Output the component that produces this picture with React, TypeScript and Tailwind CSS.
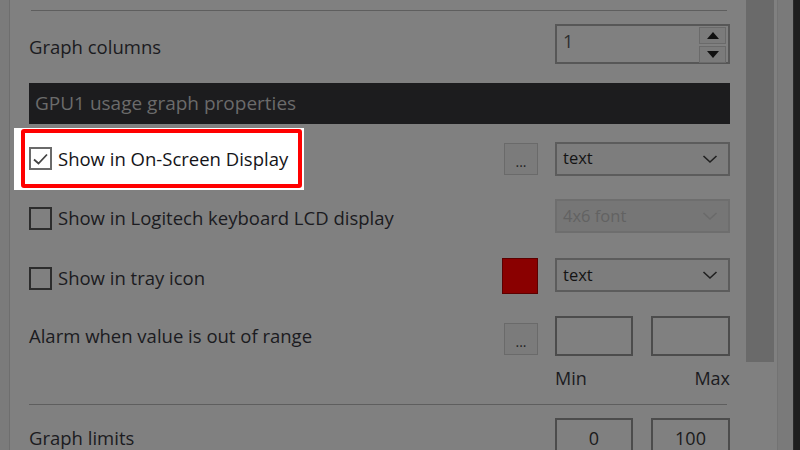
import React from 'react';

const font = { fontFamily: '"Open Sans", "Noto Sans", sans-serif' };

const Chevron: React.FC<{ color?: string }> = ({ color = '#202020' }) => (
  <svg width="16" height="10" viewBox="0 0 16 10" className="shrink-0">
    <path d="M1.5 2 L8 8 L14.5 2" fill="none" stroke={color} strokeWidth="1.6" />
  </svg>
);

const CheckBox: React.FC<{ checked?: boolean; light?: boolean }> = ({ checked, light }) => (
  <div
    className={`w-[23px] h-[23px] shrink-0 flex items-center justify-center ${
      light ? 'border-2 border-[#6a6a6a] bg-white' : 'border-2 border-[#2c2c2c]'
    }`}
  >
    {checked && (
      <svg width="17" height="14" viewBox="0 0 17 14">
        <path d="M2 7.5 L6.5 11.5 L15 2.5" fill="none" stroke="#444" strokeWidth="1.8" />
      </svg>
    )}
  </div>
);

const DotsButton = () => (
  <div className="w-[34px] h-[32px] border border-[#6a6a6a] bg-[#7b7b7b] flex items-end justify-center pb-[5px] text-[14px] leading-none text-[#222]">
    ...
  </div>
);

const Select: React.FC<{ value: string; disabled?: boolean }> = ({ value, disabled }) => (
  <div
    className={`w-[175px] h-[34px] flex items-center justify-between pl-[6px] pr-[10px] border-2 ${
      disabled ? 'bg-[#767676] border-[#6e6e6e] text-[#626262]' : 'bg-[#7d7d7d] border-[#5c5c5c] text-[#141414]'
    } text-[16.5px]`}
  >
    <span>{value}</span>
    <Chevron color={disabled ? '#6a6a6a' : '#202020'} />
  </div>
);

const Box: React.FC<{ children?: React.ReactNode; w: string }> = ({ children, w }) => (
  <div className={`${w} h-[40px] border-2 border-[#4c4c4c] flex items-center justify-center text-[18px] text-[#1a1a1a]`}>
    {children}
  </div>
);

export default function App() {
  return (
    <div className="w-[800px] h-[450px] overflow-hidden flex bg-[#808080] text-[#1b1b20]" style={font}>
      <div className="w-[10px] bg-[#7b7b7b] border-r border-[#6e6e6e]" />

      <div className="w-[729px] pl-[19px] pr-[9px] flex flex-col [&>*]:shrink-0">
        <div className="mt-[10px] h-px bg-[#5e5e5e] ml-[2px] mr-[3px]" />

        <div className="mt-[13px] h-[40px] flex items-center justify-between">
          <span className="text-[18.5px] mt-[6px]">Graph columns</span>
          <div className="w-[175px] h-[40px] border-2 border-[#575757] flex items-start justify-between pl-[6px] pr-[2px] pt-[1px]">
            <span className="text-[18px] leading-[28px] text-[#2e2e2e]">1</span>
            <div className="flex flex-col gap-[2px]">
              <div className="w-[27px] h-[17px] bg-[#7b7b7b] border border-[#6a6a6a] flex items-center justify-center">
                <svg width="12" height="7" viewBox="0 0 12 7"><path d="M0 7 L6 0 L12 7 Z" fill="#111" /></svg>
              </div>
              <div className="w-[27px] h-[17px] bg-[#7b7b7b] border border-[#6a6a6a] flex items-center justify-center">
                <svg width="12" height="7" viewBox="0 0 12 7"><path d="M0 0 L6 7 L12 0 Z" fill="#111" /></svg>
              </div>
            </div>
          </div>
        </div>

        <div className="mt-[19px] h-[41px] bg-[#1c1c1e] flex items-center pl-[6px] text-[19px] text-[#6b6b6b]">
          GPU1 usage graph properties
        </div>

        <div className="mt-[17px] h-[35px] flex items-center relative">
          <div className="absolute left-[-15px] top-[-13px] w-[290px] h-[62px] bg-white">
            <div className="absolute left-[7px] top-[1px] w-[281px] h-[59px] border-[4px] border-[#ff0000] rounded-[3px]" />
          </div>
          <div className="relative flex items-center gap-[6px]">
            <CheckBox checked light />
            <span className="text-[18.5px] text-[#141418]">Show in On-Screen Display</span>
          </div>
          <div className="ml-auto flex items-center gap-[17px]">
            <DotsButton />
            <Select value="text" />
          </div>
        </div>

        <div className="mt-[23px] h-[34px] flex items-center">
          <div className="flex items-center gap-[6px] mt-[4px]">
            <CheckBox />
            <span className="text-[18.5px]">Show in Logitech keyboard LCD display</span>
          </div>
          <div className="ml-auto">
            <Select value="4x6 font" disabled />
          </div>
        </div>

        <div className="mt-[25px] h-[36px] flex items-center">
          <div className="flex items-center gap-[6px] mt-[4px]">
            <CheckBox />
            <span className="text-[18.5px]">Show in tray icon</span>
          </div>
          <div className="ml-auto flex items-start gap-[17px] h-[36px]">
            <div className="w-[36px] h-[36px] bg-[#8a0000] border border-[#5c0000]" />
            <Select value="text" />
          </div>
        </div>

        <div className="mt-[22px] h-[40px] flex items-center">
          <span className="text-[18.5px]">Alarm when value is out of range</span>
          <div className="ml-auto flex items-center gap-[17px]">
            <div className="mt-[5px]"><DotsButton /></div>
            <div className="flex gap-[18px]">
              <Box w="w-[78px]" />
              <Box w="w-[79px]" />
            </div>
          </div>
        </div>

        <div className="mt-[11px] h-[22px] flex justify-end items-center">
          <div className="w-[175px] flex justify-between text-[18px]">
            <span>Min</span>
            <span>Max</span>
          </div>
        </div>

        <div className="mt-[15px] h-px bg-[#5e5e5e] mr-[3px]" />

        <div className="mt-[13px] h-[40px] flex items-center">
          <span className="text-[18.5px] leading-[24px]">Graph limits</span>
          <div className="ml-auto flex gap-[18px]">
            <Box w="w-[78px]">0</Box>
            <Box w="w-[79px]">100</Box>
          </div>
        </div>
      </div>

      <div className="w-[54px] flex">
        <div className="w-[7px]" />
        <div className="w-[28px] h-[362px] bg-[#6a6a6a]" />
        <div className="w-[3px]" />
        <div className="w-[16px] bg-[#7a7a7a] border-l border-[#737373]" />
      </div>

      <div className="flex-1 bg-[#1e1e1e] border-l border-[#2a2a2a]" />
    </div>
  );
}
